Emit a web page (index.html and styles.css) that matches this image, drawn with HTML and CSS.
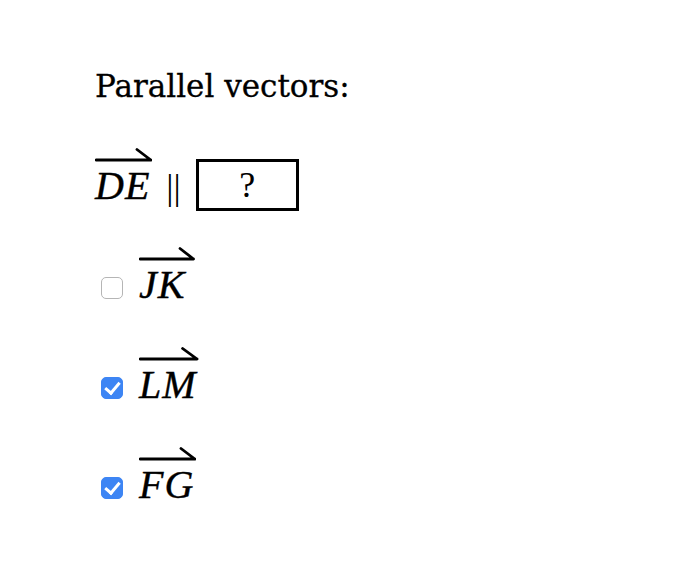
FILE: index.html
```html
<!DOCTYPE html>
<html>
<head>
<meta charset="utf-8">
<link rel="stylesheet" href="styles.css">
</head>
<body>
<main class="page">
  <h1 class="title">Parallel vectors:</h1>
  <div class="question">
    <span class="vec">
      <svg class="arrow" viewBox="0 0 56 14" preserveAspectRatio="none"><path d="M1 12H54.5M41 1.5L54.5 12" /></svg>
      <span class="vname">DE</span>
    </span>
    <span class="par">||</span>
    <span class="blank">?</span>
  </div>
  <ul class="options">
    <li class="option">
      <input type="checkbox" class="cb">
      <span class="vec">
        <svg class="arrow" viewBox="0 0 56 14" preserveAspectRatio="none"><path d="M1 12H54.5M41 1.5L54.5 12" /></svg>
        <span class="vname">JK</span>
      </span>
    </li>
    <li class="option">
      <input type="checkbox" class="cb" checked>
      <span class="vec">
        <svg class="arrow" viewBox="0 0 56 14" preserveAspectRatio="none"><path d="M1 12H54.5M41 1.5L54.5 12" /></svg>
        <span class="vname">LM</span>
      </span>
    </li>
    <li class="option">
      <input type="checkbox" class="cb" checked>
      <span class="vec">
        <svg class="arrow" viewBox="0 0 56 14" preserveAspectRatio="none"><path d="M1 12H54.5M41 1.5L54.5 12" /></svg>
        <span class="vname">FG</span>
      </span>
    </li>
  </ul>
</main>
</body>
</html>
```
FILE: styles.css
```css
html, body {
  margin: 0;
  padding: 0;
  background: #fff;
}
.page {
  padding: 64px 0 0 95px;
  font-family: "Liberation Serif", "Times New Roman", serif;
  color: #000;
}
.title {
  margin: 0;
  font-family: "DejaVu Serif", Georgia, serif;
  font-weight: normal;
  font-size: 31px;
  line-height: 44px;
  -webkit-text-stroke: 0.3px #000;
}
.question {
  margin-top: 40px;
  display: flex;
  align-items: flex-start;
}
.vec {
  display: inline-flex;
  flex-direction: column;
  align-items: stretch;
}
.arrow {
  display: block;
  height: 14px;
  width: 100%;
  margin-bottom: 5px;
  fill: none;
  stroke: #000;
  stroke-width: 2.8;
  stroke-linecap: round;
}
.vname {
  font-style: italic;
  font-size: 40px;
  line-height: 38px;
  padding-right: 2px;
  letter-spacing: 1px;
  -webkit-text-stroke: 0.4px #000;
}
.par {
  font-size: 36px;
  line-height: 38px;
  margin: 20px 15px 0 14px;
}
.blank {
  box-sizing: border-box;
  width: 103px;
  height: 52px;
  border: 3px solid #000;
  display: flex;
  align-items: center;
  justify-content: center;
  font-size: 36px;
  margin-top: 11px;
}
.options {
  list-style: none;
  margin: 36px 0 0 0;
  padding: 0;
  display: flex;
  flex-direction: column;
  gap: 43px;
}
.option {
  display: flex;
  align-items: flex-end;
  gap: 16px;
}
.cb {
  appearance: none;
  -webkit-appearance: none;
  box-sizing: border-box;
  width: 22px;
  height: 22px;
  margin: 0 0 5px 6px;
  border: 1.5px solid #b5b5b5;
  border-radius: 5px;
  background: #fff;
  position: relative;
}
.cb:checked {
  background: #3d85f4;
  border-color: #3d85f4;
}
.cb:checked::after {
  content: "";
  position: absolute;
  left: 6px;
  top: 1px;
  width: 6px;
  height: 12px;
  border: solid #fff;
  border-width: 0 3px 3px 0;
  transform: rotate(40deg);
}
```
